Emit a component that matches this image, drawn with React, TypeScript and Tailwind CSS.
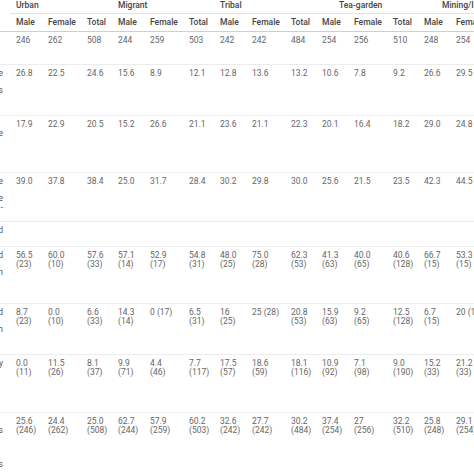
import React from 'react';

// Cells: "a|b" renders on two lines, plain strings stay on one line
type Row = { h: string; label: string[]; cells: string[] };

const groups = [
  { name: 'Urban', pad: 'pl-[6px]' },
  { name: 'Migrant', pad: 'pl-[6px]' },
  { name: 'Tribal', pad: 'pl-[6px]' },
  { name: 'Tea-garden', pad: 'pl-[23px]' },
  { name: 'Mining/Industrial', pad: 'pl-[24px]' },
];

const rows: Row[] = [
  {
    h: 'h-[33px]',
    label: [''],
    cells: ['246', '262', '508', '244', '259', '503', '242', '242', '484', '254', '256', '510', '248', '254', '502'],
  },
  {
    h: 'h-[51px]',
    label: ['Stunting prevalence', '', 'among adolescents'],
    cells: ['26.8', '22.5', '24.6', '15.6', '8.9', '12.1', '12.8', '13.6', '13.2', '10.6', '7.8', '9.2', '26.6', '29.5', '28.1'],
  },
  {
    h: 'h-[57px]',
    label: ['', 'Thinness prevalence'],
    cells: ['17.9', '22.9', '20.5', '15.2', '26.6', '21.1', '23.6', '21.1', '22.3', '20.1', '16.4', '18.2', '29.0', '24.8', '26.9'],
  },
  {
    h: 'h-[49px]',
    label: ['Anaemia prevalence', '', 'Iron deficiency prevalence', '-'],
    cells: ['39.0', '37.8', '38.4', '25.0', '31.7', '28.4', '30.2', '29.8', '30.0', '25.6', '21.5', '23.5', '42.3', '44.5', '43.4'],
  },
  {
    h: 'h-[25px]',
    label: ['Inadequate intake by food'],
    cells: [],
  },
  {
    h: 'h-[57px]',
    label: ['Cereals and pulses food', '', 'Protein'],
    cells: ['56.5|(23)', '60.0|(10)', '57.6|(33)', '57.1|(14)', '52.9|(17)', '54.8|(31)', '48.0|(25)', '75.0|(28)', '62.3|(53)', '41.3|(63)', '40.0|(65)', '40.6|(128)', '66.7|(15)', '53.3|(15)', '60.0|(30)'],
  },
  {
    h: 'h-[51px]',
    label: ['Milk and milk products food', '', 'Iron'],
    cells: ['8.7|(23)', '0.0|(10)', '6.6|(33)', '14.3|(14)', '0 (17)', '6.5|(31)', '16|(25)', '25 (28)', '20.8|(53)', '15.9|(63)', '9.2|(65)', '12.5|(128)', '6.7|(15)', '20 (15)', '13.3|(30)'],
  },
  {
    h: 'h-[58px]',
    label: ['Low dietary diversity'],
    cells: ['0.0|(11)', '11.5|(26)', '8.1|(37)', '9.9|(71)', '4.4|(46)', '7.7|(117)', '17.5|(57)', '18.6|(59)', '18.1|(116)', '10.9|(92)', '7.1|(98)', '9.0|(190)', '15.2|(33)', '21.2|(33)', '18.2|(66)'],
  },
  {
    h: 'h-[70px]',
    label: ['', 'All adolescents', '', '', '', 'Total participants'],
    cells: ['25.6|(246)', '24.4|(262)', '25.0|(508)', '62.7|(244)', '57.9|(259)', '60.2|(503)', '32.6|(242)', '27.7|(242)', '30.2|(484)', '37.4|(254)', '27|(256)', '32.2|(510)', '25.8|(248)', '29.1|(254)', '27.5|(502)'],
  },
];

const subHeads = ['Male', 'Female', 'Total'];
const gridCols = 'grid grid-cols-[200px_repeat(5,32px_39px_31px)]';

function Label({ lines }: { lines: string[] }) {
  return (
    <div className="pr-[7px] text-right text-[#555]">
      {lines.map((l, i) => (
        <div key={i} className="h-[8.5px] whitespace-nowrap">
          {l}
        </div>
      ))}
    </div>
  );
}

export default function App() {
  return (
    <div
      className="w-[474px] h-[474px] overflow-hidden bg-white text-[8.5px] leading-[8.5px]"
      style={{ fontFamily: 'Roboto, "Liberation Sans", sans-serif' }}
    >
      <div className="-ml-[190px] w-[1740px]">
        {/* Group header */}
        <div className={`${gridCols} h-[14px]`}>
          <div />
          {groups.map((g) => (
            <div
              key={g.name}
              className={`col-span-3 border-b border-[#e2e2e2] pt-px ${g.pad} font-medium text-[#444] whitespace-nowrap`}
            >
              {g.name}
            </div>
          ))}
        </div>

        {/* Sub header */}
        <div className={`${gridCols} h-[18px] border-b border-[#cfcfcf]`}>
          <div />
          {groups.flatMap((g) =>
            subHeads.map((s) => (
              <div key={g.name + s} className="pt-[4px] pl-[6px] font-medium text-[#444]">
                {s}
              </div>
            ))
          )}
        </div>

        {/* Body */}
        {rows.map((r, ri) => (
          <div key={ri} className={`${gridCols} ${r.h} border-b border-[#ececec]`}>
            <div className="pt-[4px]">
              <Label lines={r.label} />
            </div>
            {r.cells.map((c, ci) => (
              <div key={ci} className="pt-[4px] pl-[6px] text-[#666] whitespace-nowrap">
                {c.split('|').map((part, pi) => (
                  <div key={pi} className="h-[8.5px]">
                    {part}
                  </div>
                ))}
              </div>
            ))}
          </div>
        ))}
      </div>
    </div>
  );
}
